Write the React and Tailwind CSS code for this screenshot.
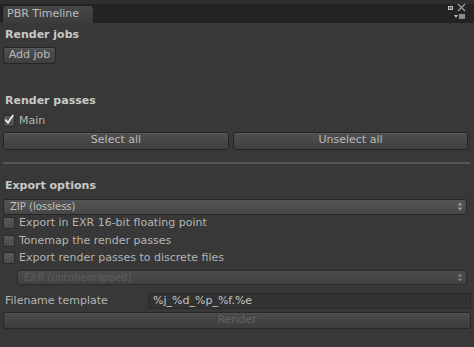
import React, { useState } from "react";

const font = { fontFamily: '"DejaVu Sans", "Liberation Sans", sans-serif' };

function Button({ children, className = "", disabled }) {
  return (
    <div
      className={
        "flex items-center justify-center rounded-[3px] border border-[#242424] bg-gradient-to-b from-[#4f4f4f] to-[#3f3f3f] text-[11px] shadow-[inset_0_1px_0_#5a5a5a] " +
        (disabled ? "text-[#6c6c6c] opacity-80 " : "text-[#b9b9b9] ") +
        className
      }
    >
      {children}
    </div>
  );
}

function Check({ checked, label, onChange }) {
  return (
    <div className="flex h-[17.5px] items-center gap-[4px]" onClick={onChange}>
      <div className="flex h-[12px] w-[12px] items-center justify-center rounded-[2px] border border-[#2a2a2a] bg-gradient-to-b from-[#5a5a5a] to-[#4a4a4a]">
        {checked && (
          <svg width="13" height="13" viewBox="0 0 12 12" className="-mt-[2px]">
            <path d="M1.5 6 L4.8 9.8 L11 0.5" stroke="#ececec" strokeWidth="2.2" fill="none" />
          </svg>
        )}
      </div>
      <span className="text-[11px] text-[#b4b4b4]">{label}</span>
    </div>
  );
}

function Dropdown({ label, disabled, className = "" }) {
  return (
    <div
      className={
        "flex items-center justify-between rounded-[3px] border border-[#262626] bg-gradient-to-b from-[#555555] to-[#464646] pl-[6px] pr-[3px] text-[10px] " +
        (disabled ? "text-[#6e6e6e] opacity-70 " : "text-[#c0c0c0] ") +
        className
      }
    >
      <span>{label}</span>
      <svg width="6" height="9" viewBox="0 0 6 9">
        <path d="M3 0.5 L5.5 3.5 H0.5 Z M3 8.5 L5.5 5.5 H0.5 Z" fill="#9a9a9a" />
      </svg>
    </div>
  );
}

export default function App() {
  const [main, setMain] = useState(true);
  const [exr16, setExr16] = useState(false);
  const [tonemap, setTonemap] = useState(false);
  const [discrete, setDiscrete] = useState(false);

  return (
    <div style={font} className="flex h-[347px] w-[474px] flex-col bg-[#383838]">
      {/* tab bar */}
      <div className="flex h-[23px] flex-col bg-[#232323]">
        <div className="h-[4px] bg-[#2e2e2e]" />
        <div className="flex flex-1 items-end justify-between">
          <div className="ml-[2px] flex h-[18px] w-[92px] items-center rounded-t-[3px] border border-b-0 border-[#1e1e1e] bg-gradient-to-b from-[#474747] to-[#3b3b3b] pl-[4px] text-[11px] text-[#bdbdbd]">
            PBR Timeline
          </div>
          <div className="relative mr-[6px] h-[19px] w-[24px]">
            <div className="absolute left-[4px] top-[2px] h-[4px] w-[5px] border border-[#bbbbbb] bg-[#666]" />
            <svg className="absolute left-[13px] top-[-1px]" width="9" height="9" viewBox="0 0 9 9">
              <path d="M1 1 L8 8 M8 1 L1 8" stroke="#9c9c9c" strokeWidth="1.3" />
            </svg>
            <svg className="absolute left-[10px] top-[11px]" width="4" height="3" viewBox="0 0 4 3">
              <path d="M0 0 H4 L2 3 Z" fill="#bbbbbb" />
            </svg>
            <div className="absolute left-[15px] top-[10px] h-[5px] w-[6px] bg-[#8a8a8a]" />
          </div>
        </div>
      </div>

      <div className="flex flex-1 flex-col px-[3px]">
        <div className="mt-[4px] flex h-[16px] items-center pl-[2px] text-[11px] font-bold text-[#c8c8c8]">
          Render jobs
        </div>
        <Button className="mt-[4px] h-[17px] w-[53px]">Add job</Button>

        <div className="mt-[29px] flex h-[16px] items-center pl-[2px] text-[11px] font-bold text-[#c8c8c8]">
          Render passes
        </div>
        <div className="mt-[3px]">
          <Check checked={main} label="Main" onChange={() => setMain(!main)} />
        </div>
        <div className="mt-[2px] flex gap-[4px] pr-[3px]">
          <Button className="h-[18px] w-[226px]">Select all</Button>
          <Button className="h-[18px] flex-1">Unselect all</Button>
        </div>
        <div className="mt-[12px] mr-[1px] h-[2px] bg-[#565656]" />

        <div className="mt-[15px] flex h-[16px] items-center pl-[2px] text-[11px] font-bold text-[#c8c8c8]">
          Export options
        </div>
        <Dropdown className="mt-[4px] mr-[4px] h-[16px]" label="ZIP (lossless)" />
        <div className="flex flex-col">
          <Check checked={exr16} label="Export in EXR 16-bit floating point" onChange={() => setExr16(!exr16)} />
          <Check checked={tonemap} label="Tonemap the render passes" onChange={() => setTonemap(!tonemap)} />
          <Check checked={discrete} label="Export render passes to discrete files" onChange={() => setDiscrete(!discrete)} />
        </div>
        <Dropdown className="ml-[14px] mr-[4px] mt-[3px] h-[15px]" label="EXR (untonemapped)" disabled />

        <div className="mt-[8px] flex h-[16px] items-center">
          <span className="w-[145px] pl-[2px] text-[11px] text-[#b4b4b4]">Filename template</span>
          <div className="flex h-[16px] flex-1 items-center border border-[#2a2a2a] bg-[#323232] pl-[4px] text-[11px] text-[#c4c4c4]">
            %j_%d_%p_%f.%e
          </div>
        </div>
        <Button className="mt-[3px] h-[17px]" disabled>Render</Button>
      </div>
    </div>
  );
}
